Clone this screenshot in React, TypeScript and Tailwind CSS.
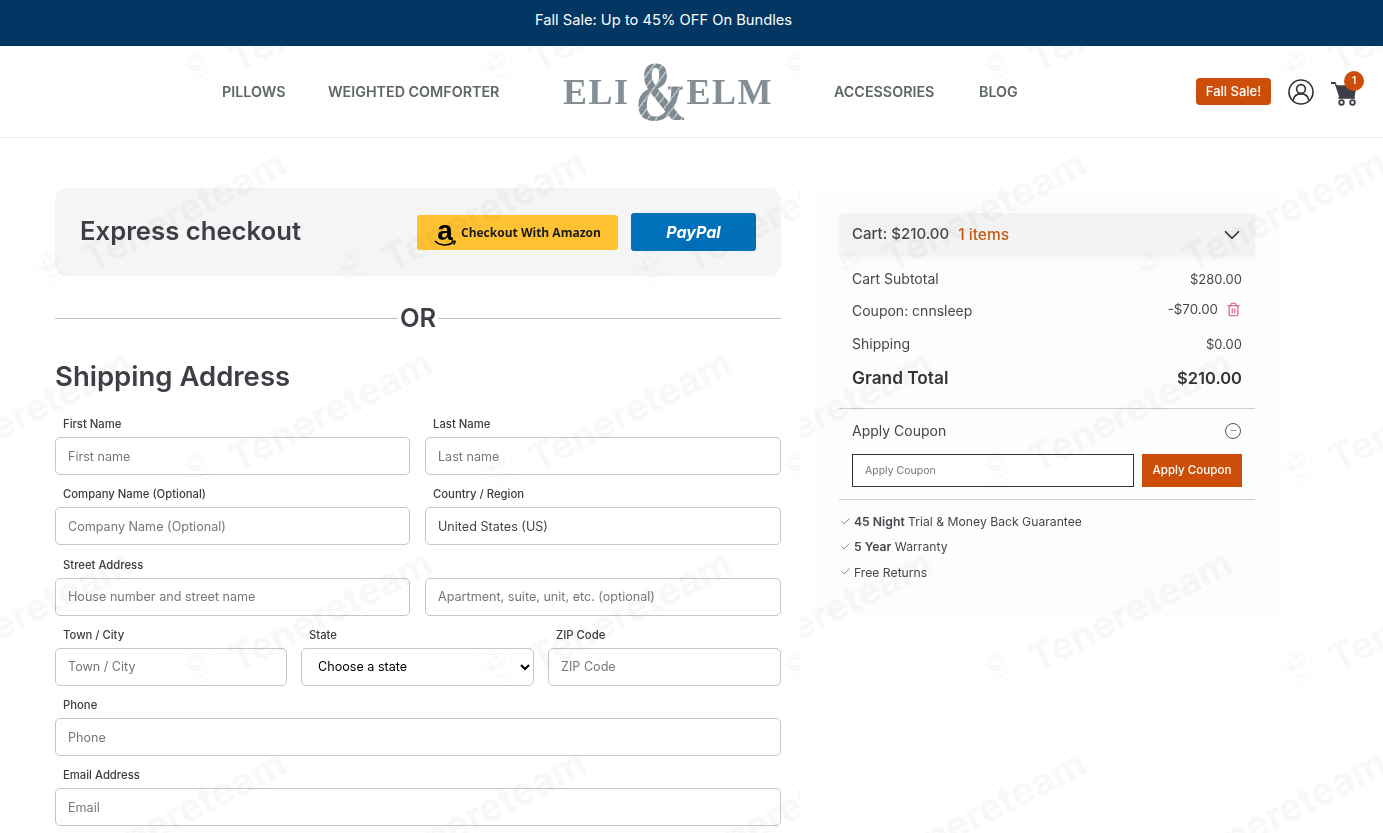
import { ChevronDown, Check, Trash2, Minus } from "lucide-react";

const font = "font-['Inter','Noto_Sans',sans-serif]";

const markRows = [
  { y: 65, xs: [-104, 196, 496, 796] },
  { y: 265, xs: [50, 350, 650] },
  { y: 465, xs: [-104, 196, 496, 796] },
  { y: 665, xs: [-104, 196, 496, 796] },
];

function Rose() {
  return (
    <svg width="38" height="50" viewBox="0 0 38 50" fill="none" stroke="#000" strokeOpacity="0.035">
      <circle cx="17" cy="19" r="16" strokeDasharray="1.5 1" />
      <path d="M9 16c3-6 12-7 16-2 3 5 0 12-6 14-6 1-12-2-12-7" strokeWidth="2" strokeDasharray="2 1.5" />
      <path d="M12 18c3-3 8-3 10 0s0 7-4 7-6-3-6-7zM15 12l4 3M10 24l7 4" strokeWidth="1.5" />
      <path d="M22 34l8-3 5 1-6 4-3 6-5 4-3-6-5-2z" strokeDasharray="2 1" />
    </svg>
  );
}

// the watermark image repeats every 800 x 600
function WatermarkTile() {
  return (
    <div className="relative w-[800px] h-[600px] shrink-0 overflow-hidden">
      {markRows.map((row) =>
        row.xs.map((x) => (
          <div key={`${row.y}-${x}`}>
            <div className="absolute" style={{ left: x - 18, top: row.y - 23 }}>
              <Rose />
            </div>
            <div
              className="absolute w-[300px] text-center -rotate-[27deg] text-[38px] leading-[50px] font-bold text-[#f8f8f8]"
              style={{ left: x - 16, top: row.y - 80 }}
            >
              Tenereteam
            </div>
          </div>
        ))
      )}
    </div>
  );
}

function Watermark() {
  return (
    <div className="absolute inset-0 z-10 overflow-hidden pointer-events-none flex flex-wrap content-start w-[1600px] mix-blend-multiply">
      <WatermarkTile />
      <WatermarkTile />
      <WatermarkTile />
      <WatermarkTile />
    </div>
  );
}

function Logo() {
  return (
    <div className="flex items-center h-[70px] w-[208px] font-['Liberation_Serif',serif] text-[#838f95]">
      <span className="text-[36px] leading-none font-bold tracking-[1.5px] w-[68px]">ELI</span>
      <span className="w-[70px] -ml-[4px] -mr-[9px] text-[84px] leading-[90px] font-bold text-center scale-x-[0.75] bg-[repeating-linear-gradient(135deg,#7f8b91_0,#7f8b91_6px,#b4bcc0_6px,#b4bcc0_8px)] bg-clip-text text-transparent">
        &amp;
      </span>
      <span className="text-[36px] leading-none font-bold tracking-[1.5px]">ELM</span>
    </div>
  );
}

function UserIcon() {
  return (
    <svg width="26" height="26" viewBox="0 0 26 26" fill="none" stroke="#2f3136" strokeWidth="1.6">
      <circle cx="13" cy="13" r="12" />
      <circle cx="13" cy="10" r="4.4" />
      <path d="M5.2 21.5c.6-4.2 3.6-6.6 7.8-6.6s7.2 2.4 7.8 6.6" />
    </svg>
  );
}

function CartIcon() {
  return (
    <svg width="28" height="28" viewBox="0 0 28 28">
      <path d="M0 3h4.4l1.4 3.2h20.2l-2.600 11.800H8.200L3.800 5H0z" fill="#3c3f45" />
      <path d="M7.500 18h16.500v1.800H7.500z" fill="#3c3f45" />
      <circle cx="10.500" cy="23.500" r="2.300" fill="none" stroke="#3c3f45" strokeWidth="1.800" />
      <circle cx="21.500" cy="23.500" r="2.300" fill="none" stroke="#3c3f45" strokeWidth="1.800" />
    </svg>
  );
}

function Header() {
  return (
    <>
      <div className="relative z-20 h-[46px] bg-[#023764] flex items-center justify-center pr-[56px] pb-[6px] text-white text-[14.7px]">
        Fall Sale: Up to 45% OFF On Bundles
      </div>
      <div className="h-[92px] border-b border-[#eeeeee] flex items-center pl-[222px] text-[14.3px] font-semibold text-[#5f6668]">
        <a className="w-[106px]">PILLOWS</a>
        <a className="w-[235px]">WEIGHTED COMFORTER</a>
        <Logo />
        <a className="ml-[63px] w-[145px]">ACCESSORIES</a>
        <a className="w-[217px]">BLOG</a>
        <div className="h-[27px] w-[75px] rounded-[4px] bg-[#cc4e08] text-white text-[13px] font-medium flex items-center justify-center">
          Fall Sale!
        </div>
        <div className="ml-[17px]">
          <UserIcon />
        </div>
        <div className="relative ml-[17px] mt-[2px]">
          <CartIcon />
          <span className="absolute -top-[8px] -right-[5px] w-[20px] h-[20px] rounded-full bg-[#cc4e08] text-white text-[10px] font-semibold flex items-center justify-center">
            1
          </span>
        </div>
      </div>
    </>
  );
}

function ExpressCheckout() {
  return (
    <div className="h-[88px] rounded-[12px] bg-[#f5f5f5] flex items-center pl-[25px] pr-[25px]">
      <h2 className="text-[25.7px] font-semibold text-[#3c3f45] -mt-[2px]">Express checkout</h2>
      <div className="ml-auto flex items-center gap-[13px]">
        <div className="w-[201px] h-[35px] rounded-[3px] bg-[#fec233] flex items-center pl-[16px] gap-[4px] mt-[1px]">
          <div className="relative w-[24px] h-[30px] flex justify-center">
            <span className="text-[28px] leading-[26px] font-bold text-black font-['Liberation_Sans',sans-serif]">a</span>
            <svg className="absolute left-0 bottom-0" width="24" height="8" viewBox="0 0 24 8" fill="none" stroke="#000" strokeWidth="1.6">
              <path d="M2 1c5 5 13 5 18 1.500M18.500 1l3.500 .5-1 3" />
            </svg>
          </div>
          <span className="text-[12px] font-bold text-[#1b1b1b] font-['Open_Sans',sans-serif]">Checkout With Amazon</span>
        </div>
        <div className="w-[125px] h-[38px] rounded-[3px] bg-[#0070ba] flex items-center justify-center text-white italic font-bold text-[16px]">
          PayPal
        </div>
      </div>
    </div>
  );
}

function Field({
  label,
  placeholder,
  value,
}: {
  label?: string;
  placeholder?: string;
  value?: string;
}) {
  return (
    <div>
      <label className="block h-[18px] pl-2 mb-[4px] text-[11.3px] leading-[18px] font-medium text-[#3b3d42]">{label ?? "\u00a0"}</label>
      <input
        readOnly
        defaultValue={value}
        placeholder={placeholder}
        className="w-full h-[38px] rounded-[5px] border border-[#c6c6c6] bg-white pl-[12px] text-[12.6px] text-[#444] placeholder:text-[#777] outline-none"
      />
    </div>
  );
}

function ShippingForm() {
  return (
    <div className="flex flex-col gap-[10.3px] mt-[19px]">
      <div className="grid grid-cols-[355px_356px] gap-x-[15px]">
        <Field label="First Name" placeholder="First name" />
        <Field label="Last Name" placeholder="Last name" />
      </div>
      <div className="grid grid-cols-[355px_356px] gap-x-[15px]">
        <Field label="Company Name (Optional)" placeholder="Company Name (Optional)" />
        <Field label="Country / Region" value="United States (US)" />
      </div>
      <div className="grid grid-cols-[355px_356px] gap-x-[15px]">
        <Field label="Street Address" placeholder="House number and street name" />
        <Field placeholder="Apartment, suite, unit, etc. (optional)" />
      </div>
      <div className="grid grid-cols-[232px_233px_233px] gap-x-[14px]">
        <Field label="Town / City" placeholder="Town / City" />
        <div>
          <label className="block h-[18px] pl-2 mb-[4px] text-[11.3px] leading-[18px] font-medium text-[#3b3d42]">State</label>
          <select className="w-full h-[38px] rounded-[5px] border border-[#c6c6c6] bg-white pl-[12px] text-[12.6px] text-black outline-none">
            <option>Choose a state</option>
          </select>
        </div>
        <Field label="ZIP Code" placeholder="ZIP Code" />
      </div>
      <Field label="Phone" placeholder="Phone" />
      <Field label="Email Address" placeholder="Email" />
    </div>
  );
}

function CartSummary() {
  return (
    <aside className="w-[465px] h-[424px] ml-[34px] mt-[4px] pt-[21px] pl-[24px] pr-[25px] rounded-[12px] bg-[#fdfdfd] text-[#45474c]">
      <div className="h-[43px] px-[13px] bg-[#f3f3f3] shadow-[0_3px_6px_rgba(0,0,0,0.03)] flex items-center text-[15px]">
        <span className="font-medium">Cart: $210.00</span>
        <span className="ml-[9px] text-[#c8590f] font-medium text-[15.5px]">1 items</span>
        <ChevronDown className="ml-auto -mr-[3px] text-[#333]" size={26} strokeWidth={1.6} />
      </div>
      <div className="px-[13px] text-[14px]">
        <div className="flex justify-between items-baseline pt-[12px] h-[45px]">
          <span>Cart Subtotal</span>
          <span className="text-[13px]">$280.00</span>
        </div>
        <div className="flex justify-between items-start h-[33px] -mt-[1px]">
          <span>Coupon: cnnsleep</span>
          <span className="flex items-center gap-[8px] mr-[1px] text-[13.3px]">
            -$70.00
            <Trash2 size={15} strokeWidth={1.8} className="text-[#e0527e]" />
          </span>
        </div>
        <div className="flex justify-between items-baseline h-[33px]">
          <span>Shipping</span>
          <span className="text-[13px]">$0.00</span>
        </div>
        <div className="flex justify-between items-baseline text-[17.3px] font-semibold text-[#333539] h-[36px] -mt-[1px] mb-[2px]">
          <span>Grand Total</span>
          <span className="text-[16.5px]">$210.00</span>
        </div>
      </div>
      <div className="border-t border-[#cfcfcf] mt-[7px] px-[13px] pt-[11px] pb-[12px]">
        <div className="flex items-center justify-between text-[14px] h-[20px]">
          <span>Apply Coupon</span>
          <span className="w-[16px] h-[16px] mr-[1px] mt-[1px] rounded-full border border-[#555] flex items-center justify-center">
            <Minus size={9} strokeWidth={1.5} />
          </span>
        </div>
        <div className="flex gap-[8px] mt-[14px]">
          <input
            readOnly
            placeholder="Apply Coupon"
            className="flex-1 min-w-0 h-[33px] border border-[#333] bg-white pl-[12px] text-[10.5px] placeholder:text-[#777] outline-none"
          />
          <div className="w-[100px] h-[33px] bg-[#cc4e08] text-white text-[11.6px] font-medium flex items-center justify-center">
            Apply Coupon
          </div>
        </div>
      </div>
      <ul className="border-t border-[#cfcfcf] pt-[10px] pl-[1px] text-[12.2px] flex flex-col">
        <li className="flex items-center gap-[3px] h-[25px]">
          <Check size={11} strokeWidth={1.4} className="-mt-[3px]" />
          <span>
            <b className="font-semibold">45 Night</b> Trial &amp; Money Back Guarantee
          </span>
        </li>
        <li className="flex items-center gap-[3px] h-[25px]">
          <Check size={11} strokeWidth={1.4} className="-mt-[3px]" />
          <span>
            <b className="font-semibold">5 Year</b> Warranty
          </span>
        </li>
        <li className="flex items-center gap-[3px] h-[26px]">
          <Check size={11} strokeWidth={1.4} className="-mt-[3px]" />
          <span>Free Returns</span>
        </li>
      </ul>
    </aside>
  );
}

export default function App() {
  return (
    <div className={`relative h-[833px] overflow-hidden bg-white ${font}`}>
      <Watermark />
      <Header />
      <main className="flex items-start pl-[55px] pt-[50px]">
        <div className="w-[726px] shrink-0">
          <ExpressCheckout />
          <div className="flex items-center gap-[2px] mt-[24px] h-[36px]">
            <div className="flex-1 h-px bg-[#bdbdbd]" />
            <span className="text-[25.5px] font-semibold text-[#3c3f45]">OR</span>
            <div className="flex-1 h-px bg-[#bdbdbd]" />
          </div>
          <h2 className="mt-[20px] text-[27.5px] leading-[40px] font-semibold text-[#3c3f45]">Shipping Address</h2>
          <ShippingForm />
        </div>
        <CartSummary />
      </main>
    </div>
  );
}
